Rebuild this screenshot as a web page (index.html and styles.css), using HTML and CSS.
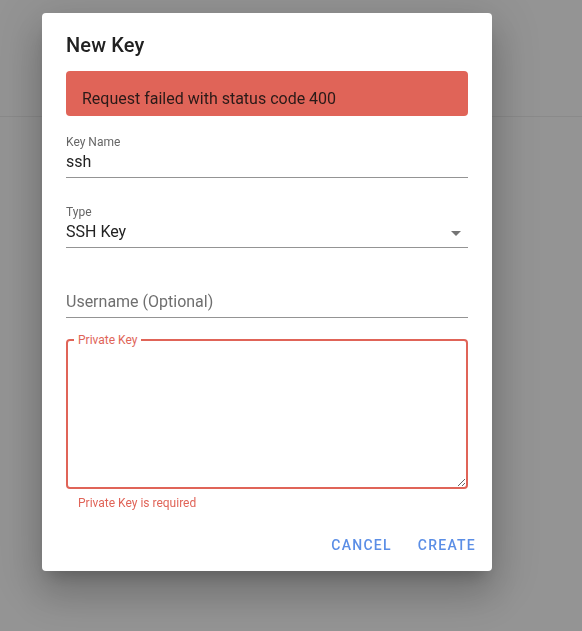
FILE: index.html
```html
<!DOCTYPE html>
<html>
<head>
<meta charset="utf-8">
<link rel="stylesheet" href="styles.css">
</head>
<body>
<div class="page">
  <div class="page-header"></div>
</div>
<div class="overlay">
  <div class="dialog">
    <div class="title">New Key</div>
    <div class="content">
      <div class="alert">Request failed with status code 400</div>
      <div class="field first">
        <div class="label">Key Name</div>
        <div class="value">ssh</div>
      </div>
      <div class="field">
        <div class="label">Type</div>
        <div class="value select">
          <span>SSH Key</span>
          <svg class="arrow" width="10" height="5" viewBox="0 0 10 5"><polygon points="0,0 10,0 5,5" fill="#757575"/></svg>
        </div>
      </div>
      <div class="field">
        <div class="label"></div>
        <div class="value placeholder">Username (Optional)</div>
      </div>
      <div class="outlined">
        <textarea class="area"></textarea>
        <span class="legend">Private Key</span>
      </div>
      <div class="helper">Private Key is required</div>
    </div>
    <div class="actions">
      <button class="btn">CANCEL</button>
      <button class="btn">CREATE</button>
    </div>
  </div>
</div>
</body>
</html>
```
FILE: styles.css
```css
html, body {
  margin: 0;
  padding: 0;
  height: 100%;
  background: #949494;
  font-family: Roboto, "Noto Sans", sans-serif;
}
.page {
  height: 100%;
}
.page-header {
  height: 116px;
  border-bottom: 1px solid #8a8a8a;
}
.overlay {
  position: fixed;
  inset: 0;
  padding: 13px 0 0 42px;
}
.dialog {
  width: 450px;
  background: #fff;
  border-radius: 4px;
  box-shadow: 0 11px 15px -7px rgba(0,0,0,.2), 0 24px 38px 3px rgba(0,0,0,.14), 0 9px 46px 8px rgba(0,0,0,.12);
  display: flex;
  flex-direction: column;
}
.title {
  padding: 16px 24px 10px;
  font-size: 20px;
  line-height: 32px;
  font-weight: 500;
  color: #212121;
  letter-spacing: 0.15px;
}
.content {
  padding: 0 24px;
  display: flex;
  flex-direction: column;
}
.alert {
  background: #e06458;
  border-radius: 4px;
  padding: 17px 16px 7px;
  font-size: 16px;
  line-height: 21px;
  color: #2a1a18;
}
.field {
  margin-top: 26px;
  border-bottom: 1px solid #949494;
}
.field.first {
  margin-top: 18px;
}
.label {
  font-size: 12px;
  line-height: 16px;
  height: 16px;
  color: #666;
}
.value {
  font-size: 16px;
  line-height: 24px;
  padding-bottom: 3px;
  color: #222;
}
.select {
  display: flex;
  align-items: center;
  justify-content: space-between;
}
.arrow {
  margin-right: 7px;
  margin-top: 2px;
}
.placeholder {
  color: #6f6f6f;
}
.outlined {
  position: relative;
  margin-top: 21px;
  display: flex;
}
.area {
  width: 402px;
  height: 150px;
  box-sizing: border-box;
  border: 2px solid #e06458;
  border-radius: 4px;
  margin: 0;
  padding: 8px 12px;
  font-family: inherit;
  outline: none;
}
.legend {
  position: absolute;
  left: 8px;
  top: -7px;
  padding: 0 4px;
  background: #fff;
  font-size: 12px;
  line-height: 16px;
  color: #e06458;
}
.helper {
  margin-top: 6px;
  padding-left: 12px;
  font-size: 12px;
  line-height: 16px;
  color: #e06458;
}
.actions {
  display: flex;
  justify-content: flex-end;
  gap: 11px;
  padding: 16px 9px 8px;
}
.btn {
  height: 36px;
  padding: 0 7px 0 8px;
  border: none;
  background: none;
  font-family: inherit;
  font-size: 14px;
  font-weight: 500;
  letter-spacing: 1.25px;
  color: #5b8ee6;
  cursor: pointer;
}
```
